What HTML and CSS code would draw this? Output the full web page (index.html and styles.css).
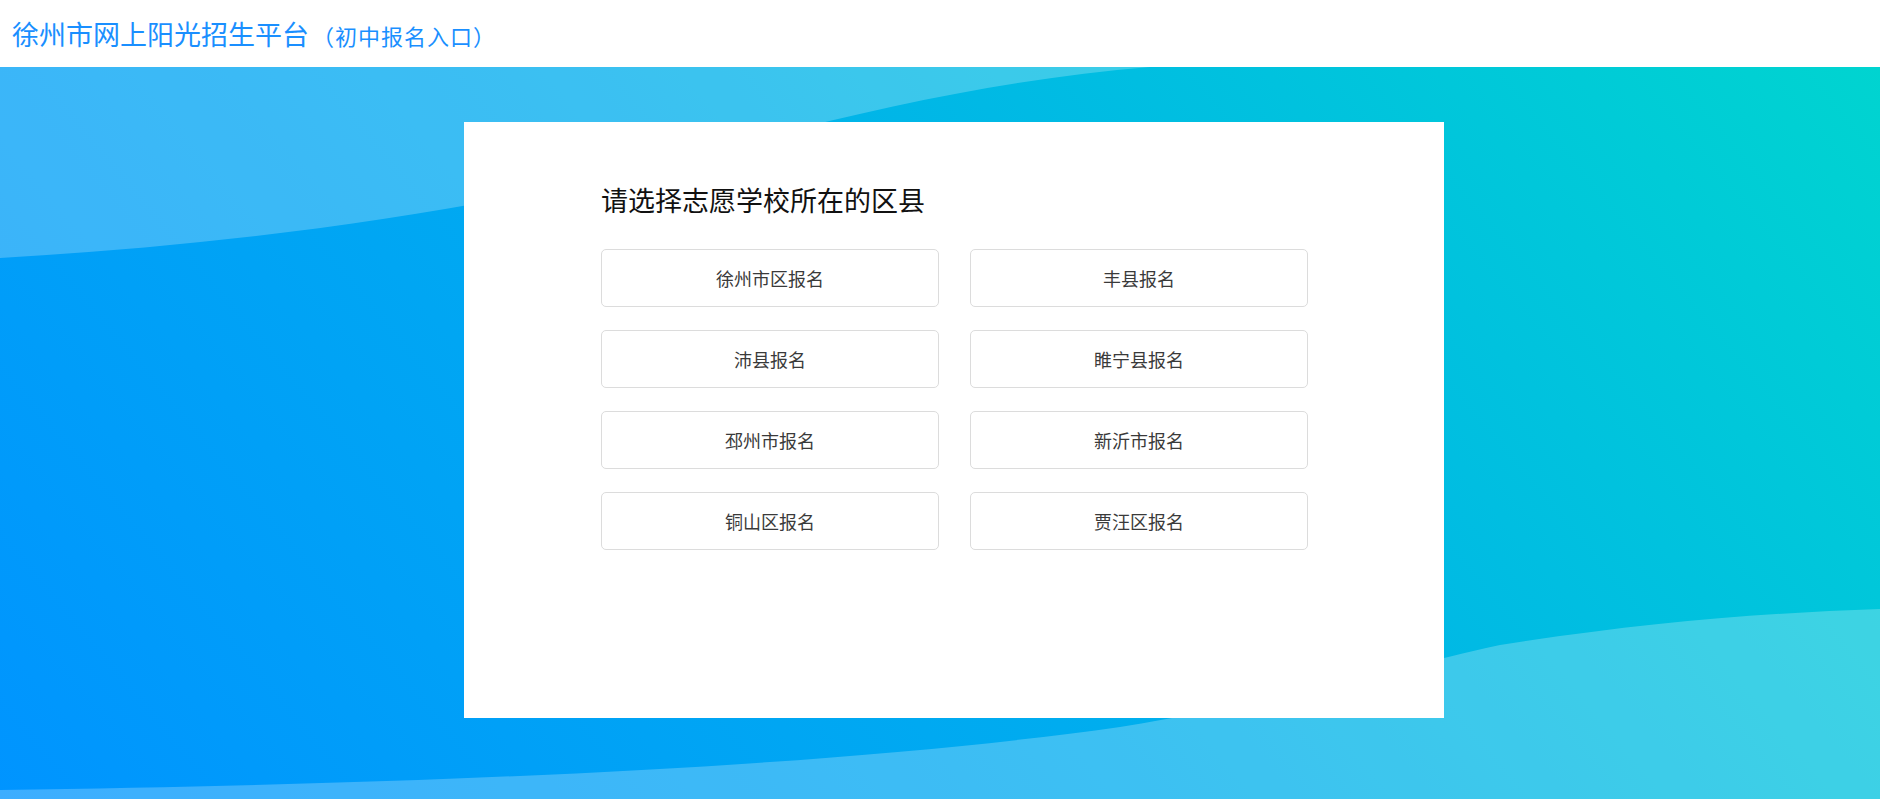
FILE: index.html
```html
<!DOCTYPE html>
<html lang="zh-CN">
<head>
<meta charset="utf-8">
<title>徐州市网上阳光招生平台</title>
<link rel="stylesheet" href="styles.css">
</head>
<body>
<header class="topbar">
  <h1 class="brand">徐州市网上阳光招生平台<span class="brand-sub">（初中报名入口）</span></h1>
</header>
<main class="stage">
  <svg class="waves" viewBox="0 0 1880 732" preserveAspectRatio="none" aria-hidden="true">
    <path class="wave-top" d="M0,0 L0,191 C260,176 520,140 760,72 C900,34 1030,10 1150,0 Z"/>
    <path class="wave-bottom" d="M0,732 L0,723 C520,716 880,694 1120,660 C1300,630 1400,600 1500,578 C1640,556 1760,546 1880,542 L1880,732 Z"/>
  </svg>
  <section class="card">
    <h2 class="card-title">请选择志愿学校所在的区县</h2>
    <div class="grid">
      <a class="area-btn" href="#">徐州市区报名</a>
      <a class="area-btn" href="#">丰县报名</a>
      <a class="area-btn" href="#">沛县报名</a>
      <a class="area-btn" href="#">睢宁县报名</a>
      <a class="area-btn" href="#">邳州市报名</a>
      <a class="area-btn" href="#">新沂市报名</a>
      <a class="area-btn" href="#">铜山区报名</a>
      <a class="area-btn" href="#">贾汪区报名</a>
    </div>
  </section>
</main>
</body>
</html>
```

FILE: styles.css
```css
* { box-sizing: border-box; }

html, body {
  margin: 0;
  padding: 0;
  height: 100%;
}

body {
  font-family: "Noto Sans CJK SC", "Noto Sans", "Liberation Sans", sans-serif;
  background: #fff;
  overflow: hidden;
}

.topbar {
  height: 67px;
  background: #fff;
  display: flex;
  align-items: center;
  padding-left: 12px;
}

.brand {
  margin: 0;
  font-weight: 400;
  font-size: 27px;
  line-height: 1;
  color: #1a8fff;
  display: flex;
  align-items: center;
}

.brand-sub {
  font-size: 22px;
  letter-spacing: 1px;
  margin-left: 3px;
  padding-top: 2px;
}

.stage {
  position: relative;
  height: 732px;
  background: linear-gradient(50deg, #0094ff 0%, #00acef 45%, #00d4d0 100%);
  display: flex;
  justify-content: center;
  padding-top: 55px;
  padding-left: 28px;
  overflow: hidden;
}

.waves {
  position: absolute;
  left: 0;
  top: 0;
  width: 100%;
  height: 100%;
  z-index: 0;
}

.wave-top { fill: rgba(255, 255, 255, 0.23); }
.wave-bottom { fill: rgba(255, 255, 255, 0.24); }

.card {
  position: relative;
  z-index: 1;
  width: 980px;
  height: 596px;
  background: #fff;
  padding: 59px 136px 0 137px;
}

.card-title {
  margin: 0 0 30px;
  font-size: 27px;
  line-height: 38px;
  font-weight: 400;
  color: #111;
}

.grid {
  display: grid;
  grid-template-columns: 338px 338px;
  grid-auto-rows: 58px;
  column-gap: 31px;
  row-gap: 23px;
}

.area-btn {
  display: flex;
  align-items: center;
  justify-content: center;
  border: 1px solid #dcdcdc;
  border-radius: 5px;
  font-size: 18px;
  color: #3a3a3a;
  text-decoration: none;
  background: #fff;
}
```
